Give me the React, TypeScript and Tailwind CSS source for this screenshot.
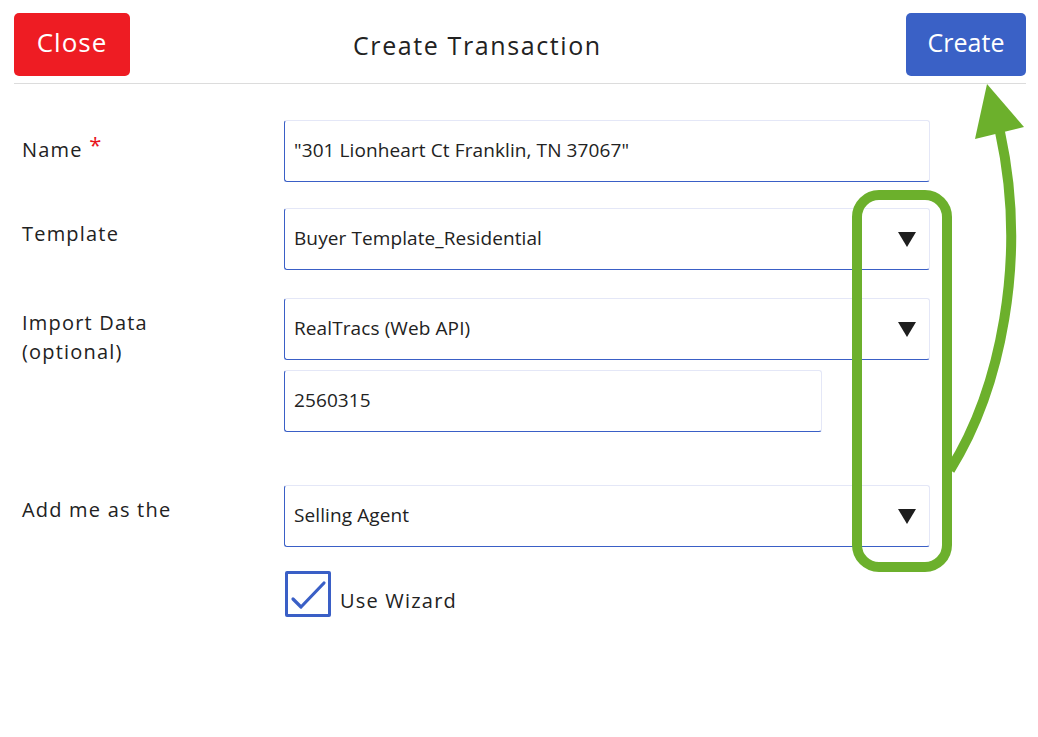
import React from "react";

const font = { fontFamily: '"Open Sans", "Noto Sans", sans-serif' };

function Caret() {
  return (
    <svg width="20" height="18" viewBox="0 0 20 18" className="shrink-0">
      <polygon points="1,2 19,2 10,17" fill="#1e1e1e" />
    </svg>
  );
}

function Field({
  value,
  select,
  width = "w-[646px]",
  height = "h-[62px]",
}: {
  value: string;
  select?: boolean;
  width?: string;
  height?: string;
}) {
  return (
    <div
      className={`${width} ${height} flex items-center justify-between rounded-[3px] border border-[#e4e7f7] border-l-[#3a5fc6] border-b-[#3a5fc6] pl-[9px] pr-[12px] text-[19px] text-[#222] tracking-[0.1px]`}
    >
      <span className="-mt-[1px]">{value}</span>
      {select && <Caret />}
    </div>
  );
}

export default function App() {
  return (
    <div className="relative w-[1038px] h-[737px] bg-white text-[#222]" style={font}>
      {/* header */}
      <div className="pl-[14px] pr-[12px] pt-[13px]">
        <div className="flex items-center">
          <button className="h-[63px] w-[116px] rounded-[5px] bg-[#ee1c23] text-white text-[26px] tracking-[1px] pb-[4px]">
            Close
          </button>
          <div className="ml-[223px] text-[25px] tracking-[1.6px] text-[#222] mt-[3px]">Create Transaction</div>
          <div className="flex-1" />
          <button className="h-[63px] w-[120px] rounded-[5px] bg-[#3a61c6] text-white text-[25px] tracking-[0px] pb-[4px]">
            Create
          </button>
        </div>
        <div className="mt-[7px] h-px bg-[#dcdcdc]" />
      </div>

      {/* form */}
      <div className="flex flex-col pt-[36px]">
        <div className="flex">
          <div className="w-[284px] pl-[22px] pt-[15px] text-[20px] tracking-[1.2px] leading-[30px]">
            Name <span className="text-[#e8141c] align-top text-[22px] leading-[22px] relative -top-[2px]">*</span>
          </div>
          <Field value={'"301 Lionheart Ct Franklin, TN 37067"'} />
        </div>

        <div className="flex mt-[26px]">
          <div className="w-[284px] pl-[22px] pt-[11px] text-[20px] tracking-[1.2px] leading-[30px]">Template</div>
          <Field value="Buyer Template_Residential" select />
        </div>

        <div className="flex mt-[28px]">
          <div className="w-[284px] pl-[22px] pt-[10px] text-[20px] tracking-[1.2px] leading-[29px]">
            Import Data
            <br />
            (optional)
          </div>
          <div className="flex flex-col gap-[10px]">
            <Field value="RealTracs (Web API)" select />
            <Field value="2560315" width="w-[538px]" />
          </div>
        </div>

        <div className="flex mt-[53px]">
          <div className="w-[284px] pl-[22px] pt-[10px] text-[20px] tracking-[1.2px] leading-[30px]">Add me as the</div>
          <Field value="Selling Agent" select />
        </div>

        <div className="flex mt-[24px] pl-[285px] items-center">
          <div className="w-[46px] h-[46px] border-[3px] border-[#3a5fc6] rounded-[2px] flex items-center justify-center">
            <svg width="40" height="40" viewBox="0 0 40 40">
              <polyline points="5,25 13,33 36,9" fill="none" stroke="#3a5fc6" strokeWidth="3.2" strokeLinecap="round" strokeLinejoin="round" />
            </svg>
          </div>
          <span className="ml-[9px] mt-[14px] text-[20px] tracking-[1.2px]">Use Wizard</span>
        </div>
      </div>

      {/* annotation overlay */}
      <svg className="absolute left-0 top-0 pointer-events-none" width="1038" height="737" viewBox="0 0 1038 737">
        <rect x="857" y="195" width="90" height="372" rx="22" ry="22" fill="none" stroke="#6cb02c" strokeWidth="10" />
        <path d="M 950 470 C 1000 390, 1028 260, 1000 132" fill="none" stroke="#6cb02c" strokeWidth="10" />
        <polygon points="987,84 1024,127 975,139" fill="#6cb02c" />
      </svg>
    </div>
  );
}
